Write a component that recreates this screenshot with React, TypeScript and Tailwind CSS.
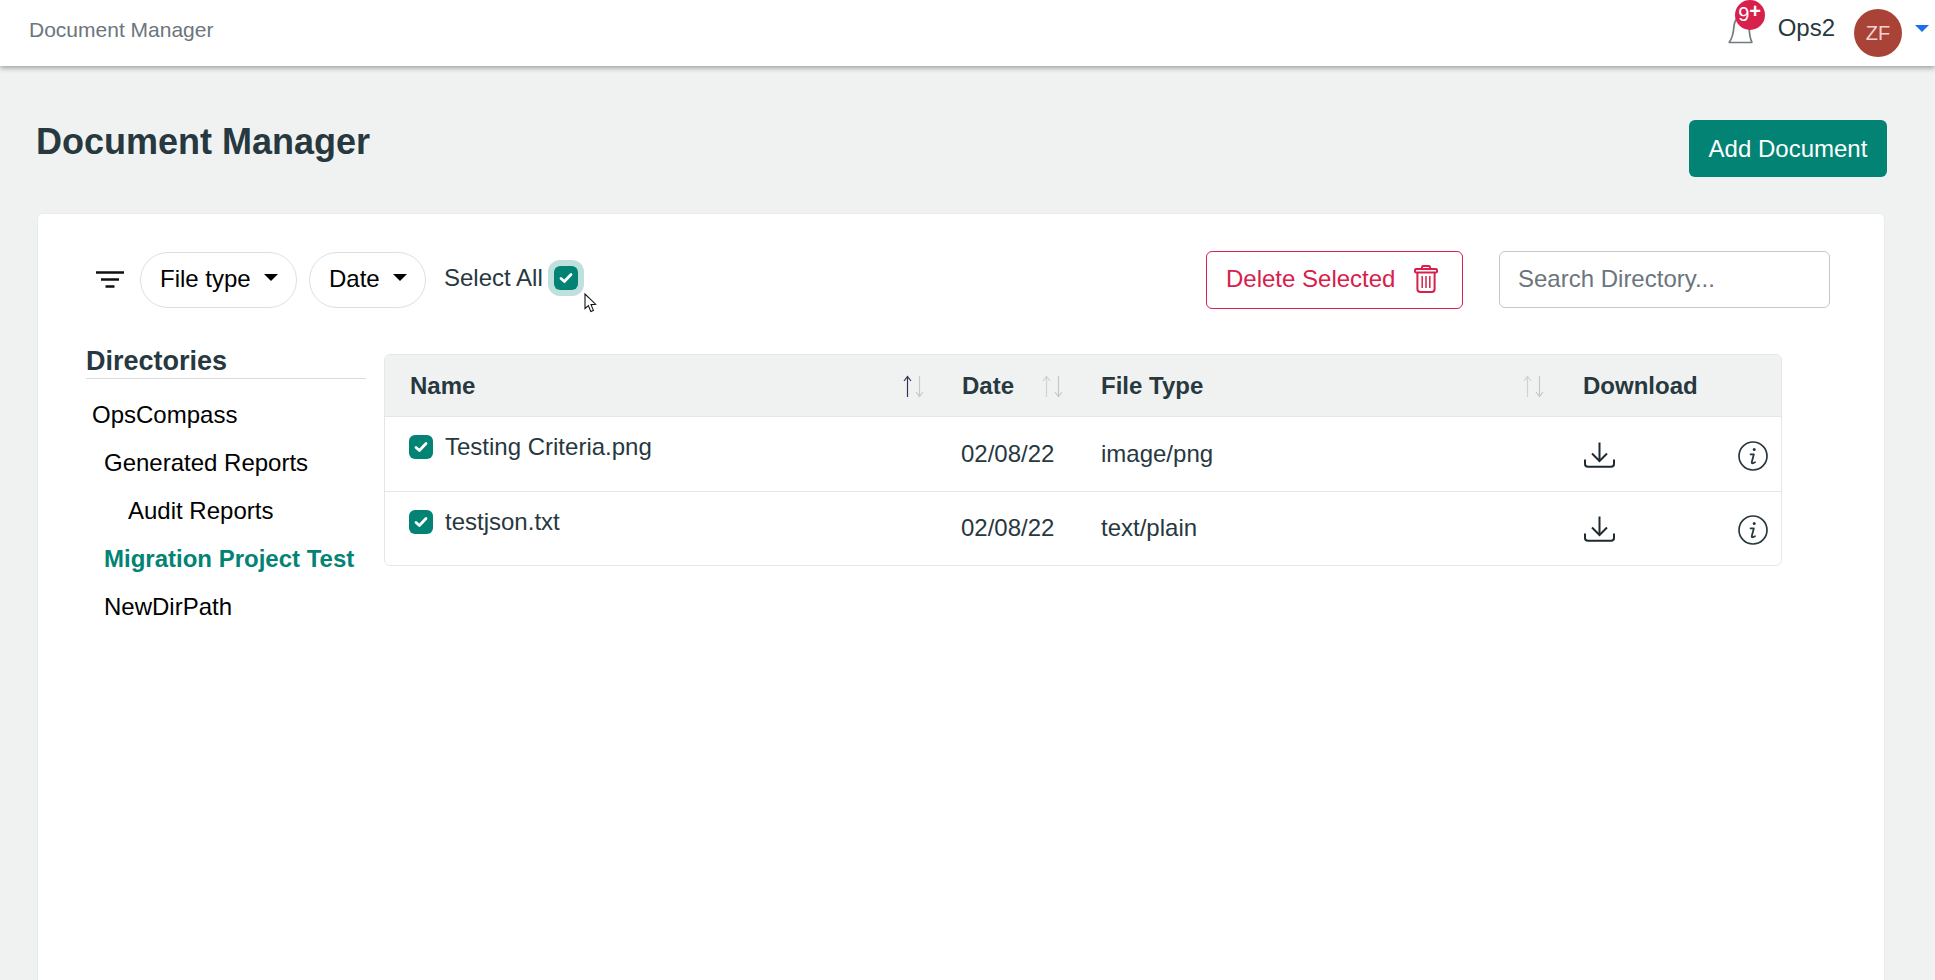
import React from 'react'

const rows = [
  { name: 'Testing Criteria.png', date: '02/08/22', type: 'image/png', height: 'h-[75px]', textCls: '', iconCls: 'mt-[2px]' },
  { name: 'testjson.txt', date: '02/08/22', type: 'text/plain', height: 'h-[73px]', textCls: 'mb-[2px]', iconCls: '' },
]

const directories = [
  { label: 'OpsCompass', cls: 'pl-[6px] text-black' },
  { label: 'Generated Reports', cls: 'pl-[18px] text-black' },
  { label: 'Audit Reports', cls: 'pl-[42px] text-black' },
  { label: 'Migration Project Test', cls: 'pl-[18px] font-bold text-[#028374]' },
  { label: 'NewDirPath', cls: 'pl-[18px] text-black' },
]

function Check() {
  return (
    <span className="flex h-6 w-6 shrink-0 items-center justify-center rounded-[6px] bg-[#028374]">
      <svg width="14" height="12" viewBox="0 0 14 12" fill="none">
        <path d="M2 6.5 L5.4 9.5 L12 2.5" stroke="white" strokeWidth="2.8" strokeLinecap="round" strokeLinejoin="round" />
      </svg>
    </span>
  )
}

function Caret() {
  return <span className="inline-block h-0 w-0 border-x-[7px] border-t-[7px] border-x-transparent border-t-black" />
}

function SortArrows({ active }: { active?: boolean }) {
  return (
    <svg width="23" height="23" viewBox="0 0 23 23" fill="none">
      <path d="M5.5 22 V1.5 M2 6 L5.5 1.5 L9 6" stroke={active ? '#3a2f5c' : '#cdd2d5'} strokeWidth="1.2" />
      <path d="M17.5 1 V21.5 M14 17 L17.5 21.5 L21 17" stroke="#c4c9cc" strokeWidth="1.2" />
    </svg>
  )
}

function DownloadIcon() {
  return (
    <svg width="31" height="26" viewBox="0 0 31 26" fill="none" stroke="#1d2b30" strokeWidth="2">
      <path d="M15.5 0.5 V18.5" />
      <path d="M8 11.5 L15.5 19 L23 11.5" />
      <path d="M1 17.5 V22 Q1 24.8 4 24.8 H27 Q30 24.8 30 22 V17.5" />
    </svg>
  )
}

function InfoIcon() {
  return (
    <svg width="30" height="30" viewBox="0 0 30 30" fill="none">
      <circle cx="15" cy="15" r="14" stroke="#27383f" strokeWidth="1.7" />
      <circle cx="16.2" cy="8.6" r="1.5" fill="#27383f" />
      <path d="M12.6 13.4 H15.8 L13.8 21 Q13.4 22.6 15 22.2 L17 21.2" stroke="#27383f" strokeWidth="1.8" strokeLinejoin="round" strokeLinecap="round" />
    </svg>
  )
}

function TrashIcon() {
  return (
    <svg width="24" height="28" viewBox="0 0 24 28" fill="none" stroke="#d7204b" strokeWidth="2">
      <path d="M8 4 V2.2 Q8 1 9.2 1 H14.8 Q16 1 16 2.2 V4" />
      <rect x="1" y="4" width="22" height="3.6" rx="1" />
      <path d="M3.4 7.6 V24 Q3.4 27 6.4 27 H17.6 Q20.6 27 20.6 24 V7.6" />
      <path d="M8.2 11 V23 M12 11 V23 M15.8 11 V23" strokeWidth="1.5" />
    </svg>
  )
}

export default function App() {
  return (
    <div className="flex h-[980px] w-[1935px] flex-col overflow-hidden bg-[#f0f2f1] [font-family:'Liberation_Sans',Arial,sans-serif] text-[24px] text-[#27383f]">
      {/* Header */}
      <header className="relative z-10 flex h-[66px] shrink-0 items-center justify-between bg-white pl-[29px] pr-[6px] shadow-[0_2px_5px_rgba(0,0,0,0.35)]">
        <span className="mb-[6px] text-[21px] text-[#6c757d]">Document Manager</span>
        <div className="flex items-center">
          <div className="relative h-[44px] w-[25px] self-start">
            <svg className="absolute left-0 top-[5px]" width="25" height="30" viewBox="0 0 25 30" fill="none">
              <path d="M0.5 28.5 H24.5 M1 28.5 Q5 24 6 12 Q7 3 13 3 Q20 3 21 12 Q21.5 24 24 28.5" stroke="#6f7c80" strokeWidth="1.7" />
            </svg>
            <span className="absolute -top-[9px] left-[7px] flex h-[30px] w-[30px] items-start justify-center rounded-full bg-[#d7204b] pt-[2px] text-[20px] leading-[24px] text-white">
              9<span className="-mt-[3px] font-bold">+</span>
            </span>
          </div>
          <span className="mb-[10px] ml-[25px] text-[#27383f]">Ops2</span>
          <span className="ml-[19px] flex h-12 w-12 items-center justify-center rounded-full bg-[#a94337] text-[20px] text-[#f3d3cd]">ZF</span>
          <span className="mb-[10px] ml-[13px] inline-block h-0 w-0 border-x-[7px] border-t-[7px] border-x-transparent border-t-[#1a6fe8]" />
        </div>
      </header>

      {/* Title */}
      <div className="flex h-[147px] shrink-0 items-start justify-between pl-[36px] pr-[48px]">
        <h1 className="mt-[55px] text-[36px] font-bold leading-[42px] text-[#27383f]">Document Manager</h1>
        <button className="mt-[54px] flex h-[57px] w-[198px] items-center justify-center rounded-[6px] bg-[#028374] text-[24px] text-white">
          Add Document
        </button>
      </div>

      {/* Card */}
      <div className="ml-[37px] mr-[50px] h-[800px] shrink-0 rounded-[6px] border border-[#e9ecef] bg-white pl-[48px] pr-[54px] pt-[37px]">
        <div className="flex h-[58px] items-center">
          <svg className="mb-[2px] ml-[10px]" width="28" height="17" viewBox="0 0 28 17" fill="none" stroke="#111" strokeWidth="2.4">
            <path d="M0 1.5 H28 M5 8.5 H23 M9.5 15.5 H18.5" />
          </svg>
          <button className="ml-[16px] flex h-[56px] w-[157px] items-center rounded-full border border-[#dcdfe1] pb-[2px] pl-[19px] text-black">
            File type<span className="mb-[4px] ml-[13px] flex"><Caret /></span>
          </button>
          <button className="ml-[12px] flex h-[56px] w-[117px] items-center rounded-full border border-[#dcdfe1] pb-[2px] pl-[19px] text-black">
            Date<span className="mb-[4px] ml-[13px] flex"><Caret /></span>
          </button>
          <span className="mb-[4px] ml-[18px]">Select All</span>
          <span className="relative mb-[4px] ml-[11px] rounded-[6px] ring-[6px] ring-[#bfe0dc]">
            <Check />
            <svg className="absolute left-[30px] top-[27px]" width="13" height="20" viewBox="0 0 13 20" fill="white" stroke="#111" strokeWidth="1.1">
              <path d="M1 1 V15.5 L4.4 12.6 L6.8 18.6 L9.4 17.4 L7 11.6 L11.6 11.2 Z" />
            </svg>
          </span>
          <button className="ml-auto flex h-[58px] w-[257px] items-center justify-between rounded-[6px] border border-[#d7204b] pb-[2px] pl-[19px] pr-[24px] text-[#d7204b]">
            Delete Selected
            <TrashIcon />
          </button>
          <input
            placeholder="Search Directory..."
            className="ml-[36px] h-[57px] w-[331px] self-start rounded-[6px] border border-[#c4c8cc] bg-white px-[18px] pb-[2px] outline-none placeholder:text-[#6c757d]"
          />
        </div>

        <div className="mt-[31px] flex items-start">
          {/* Directories */}
          <aside className="w-[280px] shrink-0">
            <h2 className="h-[39px] border-b border-[#d9dcdf] text-[27px] font-bold leading-[42px]">Directories</h2>
            <ul className="mt-[12px]">
              {directories.map((d) => (
                <li key={d.label} className={`h-[48px] leading-[48px] ${d.cls}`}>{d.label}</li>
              ))}
            </ul>
          </aside>

          {/* Table */}
          <div className="ml-[18px] mt-[14px] w-[1398px] overflow-hidden rounded-[6px] border border-[#e4e6e8]">
            <div className="grid h-[62px] grid-cols-[552px_139px_482px_1fr] items-center border-b border-[#e4e6e8] bg-[#f0f2f1] pt-[1px] font-bold">
              <div className="flex items-center justify-between pl-[25px] pr-[12px]">Name<SortArrows active /></div>
              <div className="flex items-center justify-between pl-[25px] pr-[12px]">Date<SortArrows /></div>
              <div className="flex items-center justify-between pl-[25px] pr-[13px]">File Type<SortArrows /></div>
              <div className="pl-[25px]">Download</div>
            </div>
            {rows.map((r, i) => (
              <div key={r.name} className={`grid ${r.height} grid-cols-[552px_139px_482px_1fr] items-center ${i === 0 ? 'border-b border-[#e4e6e8]' : ''}`}>
                <div className="flex items-start gap-[12px] self-start pl-[24px] pt-[18px]">
                  <Check />
                  <span className="-mt-[1px] leading-[26px]">{r.name}</span>
                </div>
                <div className={`pl-[24px] ${r.textCls}`}>{r.date}</div>
                <div className={`pl-[25px] ${r.textCls}`}>{r.type}</div>
                <div className={`flex items-center justify-between pl-[26px] pr-[13px] ${r.iconCls}`}>
                  <DownloadIcon />
                  <span className="mt-[2px]"><InfoIcon /></span>
                </div>
              </div>
            ))}
          </div>
        </div>
      </div>
    </div>
  )
}
